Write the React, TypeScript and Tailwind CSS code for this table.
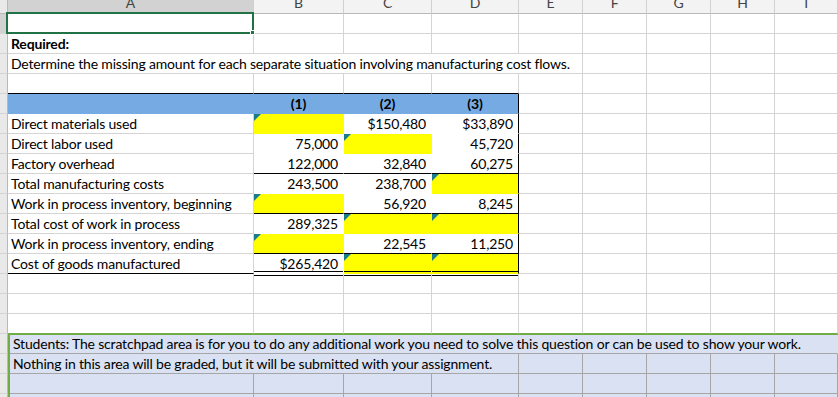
import type { ReactNode } from "react"

const W = {
  A: "w-[246px]",
  B: "w-[90px]",
  C: "w-[88px]",
  D: "w-[87px]",
  E: "w-[64px]",
  F: "w-[64px]",
  G: "w-[64px]",
  H: "w-[64px]",
}

const GRID = "border-r-[#d4d4d4] border-b-[#d4d4d4]"
const PAD = "border-r-[#a6a6a6] border-b-[#a6a6a6] bg-[#d9e1f2]"

function RowHead({ sel }: { sel?: boolean }) {
  return (
    <div
      className={`w-[8px] shrink-0 h-full border-r border-b border-r-[#b9b9b9] border-b-[#d4d4d4] ${
        sel ? "bg-[#d2d2d2]" : "bg-[#e9e9e9]"
      }`}
    />
  )
}

function Cell({ w, c = GRID, children }: { w: string; c?: string; children?: ReactNode }) {
  return (
    <div className={`${w} shrink-0 h-full border-r border-b flex items-end pb-px pl-[3px] whitespace-nowrap ${c}`}>
      {children}
    </div>
  )
}

// yellow = answer cell, line = black rule under it, last = column D (right edge of table)
function Val({
  w,
  v,
  yellow,
  line,
  last,
  dbl,
}: {
  w: string
  v?: string
  yellow?: boolean
  line?: boolean
  last?: boolean
  dbl?: boolean
}) {
  const bg = yellow ? "bg-[#ffff00]" : "bg-white"
  const r = last ? "border-r-black" : yellow ? "border-r-[#ffff00]" : "border-r-white"
  const b = line ? "border-b-black" : yellow ? "border-b-[#ffff00]" : "border-b-white"
  const d = dbl
    ? yellow
      ? "shadow-[inset_0_-1px_0_#ffff00,inset_0_-2px_0_#000]"
      : "shadow-[inset_0_-1px_0_#fff,inset_0_-2px_0_#000]"
    : ""
  return (
    <div
      className={`${w} relative shrink-0 h-full border-r border-b flex items-end justify-end pb-px pr-[5px] ${bg} ${r} ${b} ${d}`}
    >
      {yellow && (
        <span className="absolute left-0 top-0 w-0 h-0 border-t-[7px] border-r-[7px] border-t-[#1b7d8c] border-r-transparent" />
      )}
      {v}
    </div>
  )
}

function Rest({ c = GRID }: { c?: string }) {
  return (
    <>
      <Cell w={W.E} c={c} />
      <Cell w={W.F} c={c} />
      <Cell w={W.G} c={c} />
      <Cell w={W.H} c={c} />
      <Cell w="flex-1" c={c} />
    </>
  )
}

const rows: {
  label: string
  cells: { v?: string; yellow?: boolean }[]
  line?: boolean
}[] = [
  { label: "Direct materials used", cells: [{ yellow: true }, { v: "$150,480" }, { v: "$33,890" }] },
  { label: "Direct labor used", cells: [{ v: "75,000" }, { yellow: true }, { v: "45,720" }] },
  { label: "Factory overhead", cells: [{ v: "122,000" }, { v: "32,840" }, { v: "60,275" }], line: true },
  { label: "Total manufacturing costs", cells: [{ v: "243,500" }, { v: "238,700" }, { yellow: true }] },
  {
    label: "Work in process inventory, beginning",
    cells: [{ yellow: true }, { v: "56,920" }, { v: "8,245" }],
    line: true,
  },
  { label: "Total cost of work in process", cells: [{ v: "289,325" }, { yellow: true }, { yellow: true }] },
  {
    label: "Work in process inventory, ending",
    cells: [{ yellow: true }, { v: "22,545" }, { v: "11,250" }],
    line: true,
  },
]

export default function App() {
  return (
    <div className="w-[838px] h-[397px] overflow-hidden bg-white text-[14px] tracking-[-0.18px] text-black font-['Lato',sans-serif] leading-[17px]">
      {/* column headers */}
      <div className="flex h-[14px] text-[#444] leading-[14px]">
        <div className="w-[8px] shrink-0 h-full bg-[#e9e9e9] border-r border-b border-r-[#b9b9b9] border-b-[#b9b9b9]" />
        {["A", "B", "C", "D", "E", "F", "G", "H", "I"].map((l, i) => (
          <div
            key={l}
            className={`${i === 8 ? "flex-1" : Object.values(W)[i]} shrink-0 h-full overflow-hidden flex justify-center border-r border-b border-r-[#d0d0d0] border-b-[#b9b9b9] ${
              i === 0 ? "bg-[#d2d2d2]" : "bg-[#f3f3f3]"
            }`}
          >
            <span className="-mt-[4px]">{l}</span>
          </div>
        ))}
      </div>

      {/* row 1, selected */}
      <div className="flex h-[20px]">
        <RowHead sel />
        <div className={`${W.A} relative shrink-0 h-full border-r border-b ${GRID}`}>
          <div className="absolute -left-[2px] -top-[2px] -right-[1px] -bottom-[1px] z-10 border-2 border-[#217346]">
            <div className="absolute -right-[3px] -bottom-[3px] w-[5px] h-[5px] bg-[#217346] border border-white" />
          </div>
        </div>
        <Cell w={W.B} />
        <Cell w={W.C} />
        <Cell w={W.D} />
        <Rest />
      </div>

      {/* row 2 */}
      <div className="flex h-[20px]">
        <RowHead />
        <Cell w={W.A}>
          <span className="font-bold">Required:</span>
        </Cell>
        <Cell w={W.B} />
        <Cell w={W.C} />
        <Cell w={W.D} />
        <Rest />
      </div>

      {/* row 3 */}
      <div className="flex h-[20px]">
        <RowHead />
        <Cell w="w-[575px]">Determine the missing amount for each separate situation involving manufacturing cost flows.</Cell>
        <Cell w={W.F} />
        <Cell w={W.G} />
        <Cell w={W.H} />
        <Cell w="flex-1" />
      </div>

      {/* row 4, table top rule */}
      <div className="flex h-[20px]">
        <RowHead />
        <Cell w={W.A} c="border-r-[#d4d4d4] border-b-black" />
        <Cell w={W.B} c="border-r-[#d4d4d4] border-b-black" />
        <Cell w={W.C} c="border-r-[#d4d4d4] border-b-black" />
        <Cell w={W.D} c="border-r-[#d4d4d4] border-b-black" />
        <Rest />
      </div>

      {/* table header */}
      <div className="flex h-[20px]">
        <RowHead />
        <Cell w={W.A} c="bg-[#76aae2] border-r-[#76aae2] border-b-[#76aae2]" />
        {["(1)", "(2)", "(3)"].map((h, i) => (
          <div
            key={h}
            className={`${[W.B, W.C, W.D][i]} shrink-0 h-full border-r border-b flex items-end justify-center pb-px font-bold bg-[#76aae2] border-b-[#76aae2] ${
              i === 2 ? "border-r-black" : "border-r-[#76aae2]"
            }`}
          >
            {h}
          </div>
        ))}
        <Rest />
      </div>

      {rows.map((r) => (
        <div key={r.label} className="flex h-[20px]">
          <RowHead />
          <Cell w={W.A}>{r.label}</Cell>
          <Val w={W.B} {...r.cells[0]} line={r.line} />
          <Val w={W.C} {...r.cells[1]} line={r.line} />
          <Val w={W.D} {...r.cells[2]} line={r.line} last />
          <Rest />
        </div>
      ))}

      {/* cost of goods manufactured, double rule */}
      <div className="flex h-[20px]">
        <RowHead />
        <Cell w={W.A} c="border-r-[#d4d4d4] border-b-black">
          Cost of goods manufactured
        </Cell>
        <Val w={W.B} v="$265,420" dbl />
        <Val w={W.C} yellow dbl />
        <Val w={W.D} yellow dbl last />
        <Rest />
      </div>

      <div className="flex h-[20px]">
        <RowHead />
        <Cell w={W.A} />
        <Cell w={W.B} c={`${GRID} shadow-[inset_0_1px_0_#fff,inset_0_2px_0_#000]`} />
        <Cell w={W.C} c={`${GRID} shadow-[inset_0_1px_0_#fff,inset_0_2px_0_#000]`} />
        <Cell w={W.D} c={`${GRID} shadow-[inset_0_1px_0_#fff,inset_0_2px_0_#000]`} />
        <Rest />
      </div>

      <div className="flex h-[20px]">
        <RowHead />
        <Cell w={W.A} />
        <Cell w={W.B} />
        <Cell w={W.C} />
        <Cell w={W.D} />
        <Rest />
      </div>

      {/* row above scratchpad, green rule */}
      <div className="flex h-[20px]">
        <RowHead />
        <Cell w={W.A} c="border-r-[#d4d4d4] border-b-[#70ad47]" />
        <Cell w={W.B} c="border-r-[#d4d4d4] border-b-[#70ad47]" />
        <Cell w={W.C} c="border-r-[#d4d4d4] border-b-[#70ad47]" />
        <Cell w={W.D} c="border-r-[#d4d4d4] border-b-[#70ad47]" />
        <Rest c="border-r-[#d4d4d4] border-b-[#70ad47]" />
      </div>

      {/* scratchpad */}
      <div className="flex h-[20px]">
        <RowHead />
        <div className="flex-1 flex h-full border-l-2 border-t border-[#70ad47]">
          <Cell w="flex-1" c="border-r-transparent border-b-[#a6a6a6] bg-[#d9e1f2]">
            Students: The scratchpad area is for you to do any additional work you need to solve this question or can be
            used to show your work.
          </Cell>
        </div>
      </div>
      <div className="flex h-[20px]">
        <RowHead />
        <div className="flex-1 flex h-full border-l-2 border-[#70ad47]">
          <Cell w="w-[509px]" c={PAD}>
            Nothing in this area will be graded, but it will be submitted with your assignment.
          </Cell>
          <Rest c={PAD} />
        </div>
      </div>
      {[0, 1].map((k) => (
        <div key={k} className="flex h-[20px]">
          <RowHead />
          <div className="flex-1 flex h-full border-l-2 border-[#70ad47]">
            <Cell w="w-[244px]" c={PAD} />
            <Cell w={W.B} c={PAD} />
            <Cell w={W.C} c={PAD} />
            <Cell w={W.D} c={PAD} />
            <Rest c={PAD} />
          </div>
        </div>
      ))}
    </div>
  )
}
